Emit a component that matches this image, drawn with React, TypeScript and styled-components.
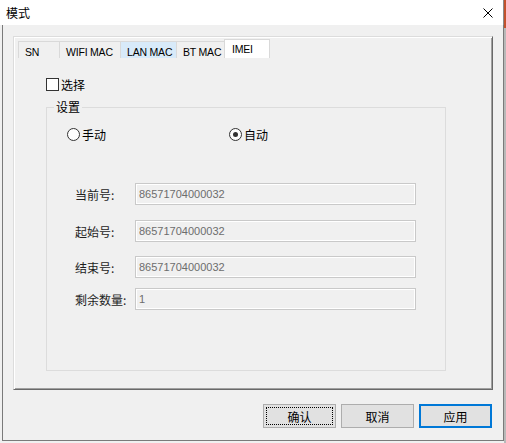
import React from 'react';
import styled, { createGlobalStyle } from 'styled-components';

const cjk = `"Noto Sans CJK SC", "Microsoft YaHei", sans-serif`;
const latin = `"Liberation Sans", "Noto Sans CJK SC", sans-serif`;

const GlobalStyle = createGlobalStyle`
  html, body {
    margin: 0;
    padding: 0;
    background: #f0f0f0;
  }
  * {
    box-sizing: border-box;
  }
`;

const Page = styled.div`
  display: flex;
  width: 506px;
  height: 443px;
  overflow: hidden;
  background: #f0f0f0;
`;

const Behind = styled.div`
  display: flex;
  flex-direction: column;
  width: 2px;
`;

const BehindTop = styled.div`
  height: 28px;
  background: #c2512c;
`;

const BehindRest = styled.div`
  flex: 1;
  background: #b9b9b9;
`;

const Dialog = styled.div`
  display: flex;
  flex-direction: column;
  width: 504px;
  height: 441px;
  font-family: ${cjk};
  font-size: 12px;
  color: #000;
`;

const TitleBar = styled.div`
  display: flex;
  align-items: center;
  justify-content: space-between;
  height: 25px;
  padding: 0 10px 0 6px;
  background: #fff;
  border-right: 1px solid #8a8a8a;
`;

const Title = styled.span`
  line-height: 16px;
`;

const Body = styled.div`
  flex: 1;
  display: flex;
  flex-direction: column;
  margin-left: 2px;
  padding: 11px 0 0 10px;
  border-left: 1px solid #7a7a7a;
  border-right: 1px solid #7a7a7a;
  border-bottom: 1px solid #7a7a7a;
  background: #f0f0f0;
`;

const Frame = styled.div`
  display: flex;
  flex-direction: column;
  width: 480px;
  height: 354px;
  padding: 2px 0 0 4px;
  border-top: 1px solid #dcdcdc;
  border-left: 1px solid #dcdcdc;
  border-right: 1px solid #696969;
  border-bottom: 1px solid #696969;
  box-shadow: inset 1px 1px 0 #fff, inset -1px -1px 0 #a0a0a0;
`;

const TabStrip = styled.div`
  display: flex;
  align-items: flex-end;
  height: 19px;
`;

const Tab = styled.div<{ $w: number; $active?: boolean; $hover?: boolean }>`
  width: ${(p) => p.$w}px;
  height: ${(p) => (p.$active ? 19 : 17)}px;
  padding: ${(p) => (p.$active ? 3 : 4)}px 0 0 ${(p) => (p.$active ? 7 : 6)}px;
  margin-left: -1px;
  font-family: ${latin};
  font-size: 10.5px;
  letter-spacing: -0.2px;
  line-height: 12px;
  color: #000;
  white-space: nowrap;
  overflow: hidden;
  border: 1px solid #d9d9d9;
  border-bottom: none;
  background: ${(p) => (p.$active ? '#fff' : p.$hover ? '#d8eaf9' : '#f0f0f0')};
  &:first-child {
    margin-left: 0;
  }
`;

const TabPage = styled.div`
  display: flex;
  flex-direction: column;
  padding: 20px 0 0 28px;
`;

const CheckRow = styled.label`
  display: flex;
  align-items: center;
  gap: 2px;
  height: 13px;
  line-height: 13px;
`;

const CheckBox = styled.span`
  width: 13px;
  height: 13px;
  border: 1px solid #333;
  background: #fff;
`;

const GroupBox = styled.div`
  position: relative;
  width: 400px;
  height: 264px;
  margin-top: 16px;
  padding: 20px 0 0 20px;
  border: 1px solid #dcdcdc;
`;

const Caption = styled.span`
  position: absolute;
  top: -9px;
  left: 7px;
  padding: 0 2px;
  line-height: 16px;
  background: #f0f0f0;
`;

const RadioRow = styled.div`
  display: grid;
  grid-template-columns: 162px auto;
  height: 13px;
`;

const Radio = styled.label`
  display: flex;
  align-items: center;
  gap: 2px;
  line-height: 13px;
`;

const RadioDot = styled.span<{ $on?: boolean }>`
  display: flex;
  align-items: center;
  justify-content: center;
  width: 13px;
  height: 13px;
  border: 1px solid #333;
  border-radius: 50%;
  background: #fff;
  &::after {
    content: '';
    width: 5px;
    height: 5px;
    border-radius: 50%;
    background: ${(p) => (p.$on ? '#333' : 'transparent')};
  }
`;

const Fields = styled.div`
  display: flex;
  flex-direction: column;
  margin-top: 42px;
  padding-left: 8px;
`;

const FieldRow = styled.div<{ $top: number }>`
  display: flex;
  align-items: center;
  margin-top: ${(p) => p.$top}px;
`;

const FieldLabel = styled.span`
  width: 60px;
  color: #1e1e1e;
`;

const FieldBox = styled.input`
  width: 281px;
  height: 22px;
  padding: 0 0 0 3px;
  margin: 0;
  border: 1px solid #c9c9c9;
  box-shadow: inset 0 0 0 1px #fff;
  background: #f0f0f0;
  color: #6d6d6d;
  font-family: ${latin};
  font-size: 11px;
  outline: none;
`;

const ButtonRow = styled.div`
  display: flex;
  justify-content: flex-end;
  gap: 5px;
  width: 480px;
  margin-top: 14px;
  padding-right: 1px;
`;

const Button = styled.button<{ $primary?: boolean; $focus?: boolean }>`
  width: 73px;
  height: 24px;
  padding: 0;
  font-family: ${cjk};
  font-size: 12px;
  color: #000;
  background: #e1e1e1;
  border: ${(p) => (p.$primary ? '2px solid #0078d7' : '1px solid #adadad')};
  outline: ${(p) => (p.$focus ? '1px dotted #000' : 'none')};
  outline-offset: -4px;
`;

const CloseIcon = () => (
  <svg width="10" height="10" viewBox="0 0 10 10">
    <path d="M0.5 0.5 L9.5 9.5 M9.5 0.5 L0.5 9.5" stroke="#000" strokeWidth="1" fill="none" />
  </svg>
);

const tabs = [
  { label: 'SN', w: 42 },
  { label: 'WIFI MAC', w: 62 },
  { label: 'LAN MAC', w: 57, hover: true },
  { label: 'BT MAC', w: 49 },
  { label: 'IMEI', w: 46, active: true }
];

const fields = [
  { label: '当前号:', value: '86571704000032', top: 0 },
  { label: '起始号:', value: '86571704000032', top: 15 },
  { label: '结束号:', value: '86571704000032', top: 14 },
  { label: '剩余数量:', value: '1', top: 10 }
];

const App = () => (
  <Page>
    <GlobalStyle />
    <Dialog>
      <TitleBar>
        <Title>模式</Title>
        <CloseIcon />
      </TitleBar>
      <Body>
        <Frame>
          <TabStrip>
            {tabs.map((t) => (
              <Tab key={t.label} $w={t.w} $active={t.active} $hover={t.hover}>
                {t.label}
              </Tab>
            ))}
          </TabStrip>
          <TabPage>
            <CheckRow>
              <CheckBox />
              选择
            </CheckRow>
            <GroupBox>
              <Caption>设置</Caption>
              <RadioRow>
                <Radio>
                  <RadioDot />
                  手动
                </Radio>
                <Radio>
                  <RadioDot $on />
                  自动
                </Radio>
              </RadioRow>
              <Fields>
                {fields.map((f) => (
                  <FieldRow key={f.label} $top={f.top}>
                    <FieldLabel>{f.label}</FieldLabel>
                    <FieldBox readOnly value={f.value} />
                  </FieldRow>
                ))}
              </Fields>
            </GroupBox>
          </TabPage>
        </Frame>
        <ButtonRow>
          <Button $focus>确认</Button>
          <Button>取消</Button>
          <Button $primary>应用</Button>
        </ButtonRow>
      </Body>
    </Dialog>
    <Behind>
      <BehindTop />
      <BehindRest />
    </Behind>
  </Page>
);

export default App;
